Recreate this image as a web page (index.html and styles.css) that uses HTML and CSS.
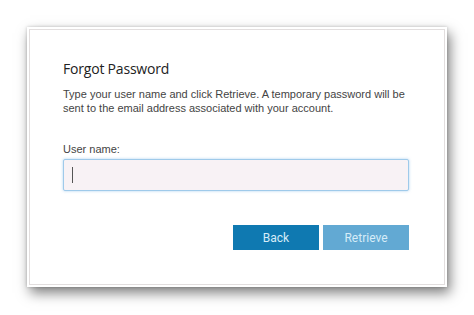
FILE: index.html
```html
<!DOCTYPE html>
<html lang="en">
<head>
    <meta name="viewport" content="width=device-width,initial-scale=1.0">
    <title>Forgot Password</title>
    <link rel="stylesheet" href="styles.css">
</head>

<body>
    <div class="frame">
        <div class="dialog">
            <h1 class="title">Forgot Password</h1>
            <p class="intro">Type your user name and click Retrieve. A temporary password will be sent to the email address associated with your account.</p>
            <label class="label" for="username">User name:</label>
            <div class="field">
                <span class="caret"></span>
            </div>
            <div class="actions">
                <button class="btn back">Back</button>
                <button class="btn retrieve">Retrieve</button>
            </div>
        </div>
    </div>
</body>

</html>
```

FILE: styles.css
```css
html {
    box-sizing: border-box;
}

*,
*:before,
*:after {
    box-sizing: inherit;
}

body {
    margin: 0;
    min-height: 315px;
    padding: 27px 0 28px 27px;
    background: #fff;
    font-family: "Liberation Sans", Arial, sans-serif;
}

.frame {
    width: 420px;
    height: 260px;
    padding: 2px;
    background: #fff;
    box-shadow: 0 0 3px rgba(0, 0, 0, 0.2), 3px 6px 12px rgba(0, 0, 0, 0.5);
}

.dialog {
    height: 100%;
    border: 1px solid #e2dede;
    padding: 29px 35px 0 33px;
    display: flex;
    flex-direction: column;
}

.title {
    margin: 0;
    font-family: "Open Sans", sans-serif;
    font-weight: 400;
    font-size: 14px;
    letter-spacing: -0.2px;
    line-height: 20px;
    color: #222;
}

.intro {
    margin: 8px 0 0;
    font-size: 11px;
    line-height: 14px;
    color: #444;
}

.label {
    margin-top: 27px;
    font-size: 11px;
    line-height: 14px;
    color: #444;
}

.field {
    margin-top: 3px;
    height: 32px;
    border: 1px solid #9fcaea;
    border-radius: 2px;
    background: #f8f2f5;
    box-shadow: 0 0 3px rgba(120, 180, 230, 0.6);
    display: flex;
    align-items: center;
    padding-left: 8px;
}

.caret {
    width: 1px;
    height: 16px;
    background: #555;
}

.actions {
    margin-top: 34px;
    display: flex;
    justify-content: flex-end;
    gap: 4px;
}

.btn {
    width: 86px;
    height: 25px;
    border: 0;
    padding: 0;
    font-family: Roboto, sans-serif;
    font-size: 12px;
    color: #d6ecf8;
}

.back {
    background: #0f79b1;
}

.retrieve {
    background: #62a9d3;
}
```
